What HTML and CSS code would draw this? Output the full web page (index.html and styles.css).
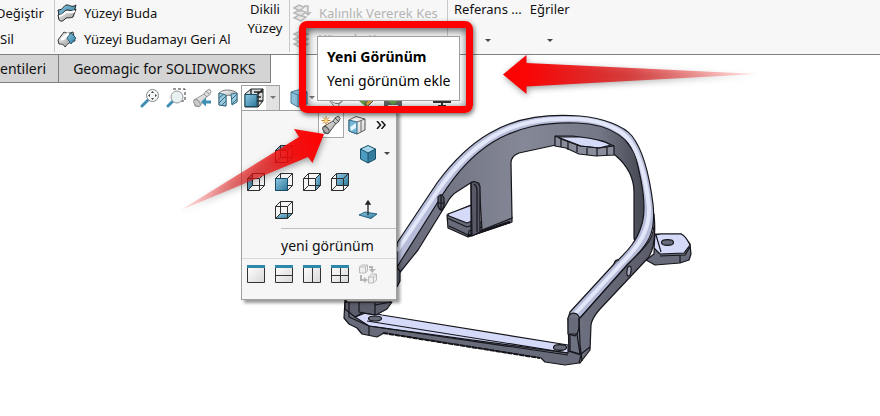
FILE: index.html
```html
<!DOCTYPE html>
<html lang="tr">

<head>
    <meta charset="UTF-8">
    <meta name="viewport" content="width=device-width, initial-scale=1.0">
    <title>Yeni Görünüm</title>
    <link rel="stylesheet" href="styles.css">
</head>

<body>
    <!-- shared icon shapes -->
    <svg class="defs" width="0" height="0" aria-hidden="true">
        <defs>
            <linearGradient id="blue" x1="0" y1="0" x2="1" y2="1">
                <stop offset="0" stop-color="#8fc9e4" />
                <stop offset="1" stop-color="#2c7799" />
            </linearGradient>
            <linearGradient id="gray" x1="0" y1="0" x2="1" y2="1">
                <stop offset="0" stop-color="#ffffff" />
                <stop offset="1" stop-color="#8d8d8d" />
            </linearGradient>
            <linearGradient id="pane" x1="0" y1="0" x2="1" y2="1">
                <stop offset="0" stop-color="#ffffff" />
                <stop offset="1" stop-color="#d8d8d8" />
            </linearGradient>
            <symbol id="wire" viewBox="0 0 20 20">
                <path d="M1.500 6.500h12v12h-12zM6.500 1.500h12v12h-12zM1.500 6.500l5-5M13.500 6.500l5-5M13.500 18.500l5-5M1.500 18.500l5-5" fill="none" stroke="#2d2d2d" />
            </symbol>
            <symbol id="scope" viewBox="0 0 20 20">
                <path d="M2 12L12 6 14 3 17.500 1 19 3.500 17.500 7 14.500 9 7.500 18.500 3 18z" fill="url(#gray)" stroke="#555" />
                <path d="M12 6l3 3M14 3l4 4" stroke="#555" />
                <ellipse cx="5" cy="15" rx="2.500" ry="4" transform="rotate(-40 5 15)" fill="#aaa" stroke="#555" />
            </symbol>
        </defs>
    </svg>

    <header class="ribbon">
        <div class="group group-first">
            <button class="cmd cmd-clipped">Değiştir</button>
            <button class="cmd">Sil</button>
        </div>
        <div class="group group-trim">
            <button class="cmd">
                <svg class="icon" viewBox="0 0 20 20">
                    <path d="M1 7c6 0 5-5 9-5s4 3 9 0l-2 7c-5 2-6-1-9 2s-3 3-6 1z" fill="url(#blue)" stroke="#222" />
                    <path d="M1 12c5 1 6-5 9-5s5 2 9-1l-3 8c-4 2-6-1-9 3-2 2-4 1-5 0z" fill="url(#gray)" stroke="#222" />
                    <path d="M2 13c5 0 5-4 8-4s4 1 8-1" fill="none" stroke="#fff" stroke-width="2" />
                </svg>
                Yüzeyi Buda
            </button>
            <button class="cmd">
                <svg class="icon" viewBox="0 0 20 20">
                    <path d="M1 11l6-8c3 2 6 1 9 0l2 9c-4 1-6 1-10 6-1-3-4-3-6-3z" fill="url(#gray)" stroke="#333" />
                    <path d="M4 10c5 0 4-4 8-5" fill="none" stroke="#fff" stroke-width="3" />
                    <path d="M10 9l4-5 5 5-5 6z" fill="url(#blue)" stroke="#27617d" />
                </svg>
                Yüzeyi Budamayı Geri Al
            </button>
        </div>
        <div class="group group-knit">
            <button class="cmd-tall">Dikili<br>Yüzey</button>
        </div>
        <div class="group group-cut">
            <button class="cmd" disabled>
                <svg class="icon" viewBox="0 0 20 20">
                    <path d="M2 5l5-3 5 2-4 4zM2 10l5-3 7 2-5 4zM2 15l5-3 7 2-5 4zM12 3h4v8M13 9l3 3 3-3" fill="#e6e6e6" stroke="#b8b8b8" stroke-width="1.500" />
                </svg>
                Kalınlık Vererek Kes
            </button>
            <button class="cmd" disabled>
                <svg class="icon" viewBox="0 0 20 20">
                    <path d="M2 5l7-3 7 3-7 4zM2 10l7-3 7 3-7 4zM2 15l7-3 7 3-7 4z" fill="#ddd" stroke="#b8b8b8" stroke-width="1.500" />
                </svg>
                Yüzeyle Kes
            </button>
        </div>
        <div class="group group-ref">
            <button class="cmd-tall">Referans ...<i class="caret"></i></button>
            <button class="cmd-tall">Eğriler<i class="caret"></i></button>
        </div>
    </header>

    <nav class="tabs">
        <button class="tab tab-clipped">entileri</button>
        <button class="tab">Geomagic for SOLIDWORKS</button>
    </nav>

    <main class="viewport">
        <div class="toolbar">
            <button class="tool" aria-label="Ekrana sığdır">
                <svg class="icon" viewBox="0 0 20 20">
                    <path d="M2 18l6-6" stroke="#3f8fb5" stroke-width="3" stroke-linecap="round" />
                    <circle cx="12.500" cy="7.500" r="6" fill="#f4f7f8" stroke="#888" />
                    <path d="M12.500 3l1.500 2h-3zM12.500 12l1.500-2h-3zM8 7.500l2-1.500v3zM17 7.500l-2-1.500v3z" fill="#444" />
                </svg>
            </button>
            <button class="tool" aria-label="Alana yakınlaştır">
                <svg class="icon" viewBox="0 0 20 20">
                    <path d="M7 1h12v12h-4" fill="none" stroke="#333" stroke-dasharray="3 2" />
                    <path d="M2 18l5-5" stroke="#3f8fb5" stroke-width="3" stroke-linecap="round" />
                    <circle cx="11" cy="9" r="6" fill="#e8f0f2" stroke="#999" />
                </svg>
            </button>
            <button class="tool" aria-label="Önceki görünüm">
                <svg class="icon" viewBox="0 0 20 20">
                    <g opacity=".6"><use href="#scope" /></g>
                    <path d="M9 14l5-4.500v3h5v3h-5v3z" fill="#3f8fb5" />
                </svg>
            </button>
            <button class="tool" aria-label="Kesit görünümü">
                <svg class="icon" viewBox="0 0 20 20">
                    <path d="M1 5c4-4 13-4 18 0v9l-5 2V8c-2-1-5-1-6 0v10l-7-1z" fill="url(#gray)" stroke="#777" />
                    <path d="M1 5l7 2v11l-7-1zM13 6l6-1v9l-5 3z" fill="#9cc9dd" stroke="#386e87" />
                    <path d="M1 10l5-4M1 15l7-7M3 18l5-5M13 12l6-6M14 16l5-5" stroke="#386e87" />
                </svg>
            </button>
            <div class="orient">
                <button class="orient-btn" aria-label="Görünüm yönü">
                    <svg class="icon" viewBox="0 0 20 20">
                        <path d="M1 6l6-5h12v12l-5 6H1z" fill="#d8dcde" stroke="#222" />
                        <path d="M7 1v12h12M19 1l-5 5v13M14 4v9M10 4h9M8 9h9" fill="none" stroke="#222" stroke-width="1.400" />
                        <path d="M1 6.500h12v12H1z" fill="url(#blue)" stroke="#174c64" />
                    </svg>
                </button>
                <button class="orient-drop" aria-label="Aç"><i class="caret"></i></button>

                <!-- orientation menu -->
                <div class="menu">
                    <div class="menu-top">
                        <button class="pick pick-new" aria-label="Yeni Görünüm">
                            <svg class="icon" viewBox="0 0 20 20">
                                <use href="#scope" />
                                <path d="M5 1v9M.5 5.500h9M2 2.500l6 6M8 2.500l-6 6" stroke="#c77819" />
                                <circle cx="5" cy="5.500" r="1.500" fill="#ffe08a" />
                            </svg>
                        </button>
                        <button class="pick" aria-label="Görünüm seçici">
                            <svg class="icon" viewBox="0 0 20 20">
                                <path d="M2 5l7-3.500 9 2.500v11l-8 4-8-3z" fill="url(#pane)" stroke="#555" />
                                <path d="M2 5l8 2v12l-8-3z" fill="#72b7d6" stroke="#326d88" />
                                <path d="M3 12l6-4v5l-5 3z" fill="#e4f5fc" />
                                <path d="M10 7l8-3M14 6v11" fill="none" stroke="#666" />
                            </svg>
                        </button>
                        <button class="pick more" aria-label="Daha fazla">
                            <svg class="chevrons" viewBox="0 0 10 8"><path d="M1 0l3.500 4L1 8M5.500 0L9 4 5.500 8" fill="none" stroke="#111" stroke-width="1.500" /></svg>
                        </button>
                    </div>
                    <div class="views">
                        <button class="pick view-top" aria-label="Üst">
                            <svg class="icon" viewBox="0 0 20 20"><path d="M1.500 6.500l5-5h12l-5 5z" fill="url(#blue)" /><use href="#wire" /></svg>
                        </button>
                        <button class="pick view-iso" aria-label="İzometrik">
                            <svg class="icon" viewBox="0 0 20 20">
                                <path d="M10 1.500l7.500 3.500v10L10 19l-7.500-4V5z" fill="#4b9cc0" />
                                <path d="M10 1.500L17.500 5 10 9 2.500 5z" fill="#a4d5eb" />
                                <path d="M10 9l7.500-4v10L10 19z" fill="#347d9e" />
                                <path d="M10 1.500l7.500 3.500v10L10 19l-7.500-4V5zM2.500 5l7.500 4 7.500-4M10 9v10" fill="none" stroke="#1d526b" />
                            </svg>
                        </button>
                        <i class="caret view-caret"></i>
                        <button class="pick view-left" aria-label="Sol">
                            <svg class="icon" viewBox="0 0 20 20"><path d="M1.500 6.500l5-5v12l-5 5z" fill="url(#blue)" /><use href="#wire" /></svg>
                        </button>
                        <button class="pick" aria-label="Ön">
                            <svg class="icon" viewBox="0 0 20 20"><use href="#wire" /><path d="M1.500 6.500h12v12h-12z" fill="url(#blue)" stroke="#174c64" /></svg>
                        </button>
                        <button class="pick" aria-label="Sağ">
                            <svg class="icon" viewBox="0 0 20 20"><path d="M13.500 6.500l5-5v12l-5 5z" fill="url(#blue)" /><use href="#wire" /></svg>
                        </button>
                        <button class="pick" aria-label="Arka">
                            <svg class="icon" viewBox="0 0 20 20"><path d="M6.500 1.500h12v12h-12z" fill="url(#blue)" /><use href="#wire" /></svg>
                        </button>
                        <button class="pick view-bottom" aria-label="Alt">
                            <svg class="icon" viewBox="0 0 20 20"><path d="M1.500 18.500l5-5h12l-5 5z" fill="url(#blue)" /><use href="#wire" /></svg>
                        </button>
                        <button class="pick view-normal" aria-label="Dik">
                            <svg class="icon" viewBox="0 0 20 20">
                                <path d="M1 15l6-3 12 2-6 4.500z" fill="url(#blue)" stroke="#27617d" />
                                <path d="M10 15V2M8 4l2-3 2 3z" fill="#222" stroke="#222" stroke-width="1.300" />
                            </svg>
                        </button>
                    </div>
                    <button class="saved">yeni görünüm</button>
                    <div class="layouts">
                        <button class="pick" aria-label="Tek görünüm">
                            <svg class="icon" viewBox="0 0 20 20"><path d="M1.500 1.500h17v17h-17z" fill="url(#pane)" stroke="#333" /><path d="M1 1h18v3H1z" fill="#2f86ab" /></svg>
                        </button>
                        <button class="pick" aria-label="İki görünüm yatay">
                            <svg class="icon" viewBox="0 0 20 20"><path d="M1.500 1.500h17v17h-17zM1.500 11.500h17" fill="url(#pane)" stroke="#333" /><path d="M1 1h18v3H1z" fill="#2f86ab" /></svg>
                        </button>
                        <button class="pick" aria-label="İki görünüm dikey">
                            <svg class="icon" viewBox="0 0 20 20"><path d="M1.500 1.500h17v17h-17zM10.500 3v15.500" fill="url(#pane)" stroke="#333" /><path d="M1 1h18v3H1z" fill="#2f86ab" /></svg>
                        </button>
                        <button class="pick" aria-label="Dört görünüm">
                            <svg class="icon" viewBox="0 0 20 20"><path d="M1.500 1.500h17v17h-17zM10.500 3v15.500M1.500 11.500h17" fill="url(#pane)" stroke="#333" /><path d="M1 1h18v3H1z" fill="#2f86ab" /></svg>
                        </button>
                        <button class="pick" aria-label="Görünümleri bağla" disabled>
                            <svg class="icon" viewBox="0 0 20 20">
                                <path d="M1.500 3l2-2h6v6l-2 2h-6zM10.500 13l3-3h5v6l-3 3h-5zM1.500 3h6v6M7.500 3l2-2M10.500 13h5v6M15.500 13l3-3" fill="#eee" stroke="#bbb" />
                                <path d="M11 2h4v3h3l-4 4-3-4h2V4h-2zM2 11h2v4h2v-2l4 3-4 3v-2H2z" fill="#b5b5b5" />
                            </svg>
                        </button>
                    </div>
                </div>
            </div>
            <button class="tool tool-style" aria-label="Görüntü stili">
                <svg class="icon" viewBox="0 0 20 20">
                    <path d="M2 4l10-3 6 3v12l-9 3-7-4z" fill="#8cc0d9" stroke="#487d96" />
                    <path d="M2 4l7 3v12M9 7l9-3" fill="none" stroke="#487d96" />
                </svg>
                <i class="caret"></i>
            </button>
            <button class="tool tool-hide" aria-label="Gizle/göster">
                <svg class="icon" viewBox="0 0 20 20"><path d="M1 8c5 10 13 10 18 0M2 12l5 6M18 8l-7 10" fill="none" stroke="#777" /></svg>
            </button>
            <button class="tool tool-look" aria-label="Görünümü düzenle">
                <svg class="icon" viewBox="0 0 20 20"><path d="M2 13h12l-5 6z" fill="#65a044" /><path d="M8 15l8-6 2 2-8 8z" fill="#d4a847" stroke="#555" /></svg>
            </button>
            <button class="tool" aria-label="Sahne uygula">
                <svg class="icon" viewBox="0 0 20 20"><path d="M1 12h18v7h-4v-2H5v2H1z" fill="#666" /><path d="M5 13h10l-5 4z" fill="#65a044" /></svg>
            </button>
            <button class="tool tool-screen" aria-label="Görünüm ayarları">
                <svg class="icon" viewBox="0 0 20 20"><path d="M1 14h18M10 14v4M6 18h8" stroke="#333" stroke-width="2" /></svg>
                <i class="caret"></i>
            </button>
        </div>

        <!-- frame part -->
        <svg class="model" viewBox="340 110 360 260" role="img" aria-label="Parça">
            <defs>
                <linearGradient id="wall" x1="0" x2="1">
                    <stop offset="0" stop-color="#676978" />
                    <stop offset=".5" stop-color="#858896" />
                    <stop offset=".8" stop-color="#747786" />
                    <stop offset="1" stop-color="#3f414b" />
                </linearGradient>
                <linearGradient id="near" x1="0" x2="1">
                    <stop offset="0" stop-color="#707382" />
                    <stop offset="1" stop-color="#595b68" />
                </linearGradient>
            </defs>
            <g stroke="#15151b" stroke-width="1.200" stroke-linejoin="round" fill="#686b79">
                <!-- right ear -->
                <path d="M646 260l8-6 1-20 26 0 9 10 1 10-2 6-9 3-25 2z" />
                <path d="M655 235l6-1h20c5 2 7 7 9 11l-6 8-24 1-6-6z" fill="#d4daf8" />
                <path d="M656 235l5 17M660 256l25-1 5-8M680 255v8" fill="none" />
                <ellipse cx="667.500" cy="242.500" rx="6" ry="2.800" />

                <!-- left foot -->
                <path d="M447 215l24-10 3 18 38-6v5l-44 15-20-9z" />
                <path d="M448 214l24-9v16l-5 2-18-7z" fill="#d4daf8" />
                <path d="M447 218l20 9 6-2M468 236l1-5 43-13M449 226l19 9 6-1" fill="none" />
                <path d="M468 236l42-14" stroke-width="2.500" />

                <!-- back wall -->
                <path d="M397 276L418 250 447 203Q451 195 458 191L472 182 479 183 482 230 512 218 511 163Q511 156 519 153L556 145 615 155Q634 171 634 192L634 239 637 241 650 205 636 155 618 130 580 118 540 120 500 132 455 170 397 256z" fill="url(#wall)" />
                <path d="M471 183q4-4 9 3v46l-8 4z" fill="#575966" />
                <path d="M474 184q3 2 3 6v42" fill="none" />
                <path d="M471 183v52" fill="none" />

                <!-- inner tab -->
                <path d="M555 136l18 0 30 5 11 5v9l-18 1-17-2-13-6-11-2z" fill="#898c9b" />
                <path d="M558 137l22 0q20 2 31 8l-12 3-19-2-19-7z" fill="#d4daf8" />
                <path d="M555 136l13 5 13 5 18 2 15-2M561 139v8M568 142v8M577 145v7M587 148v7M597 148v8M607 147v8" fill="none" />

                <!-- rounded rim -->
                <path d="M397 243L437 183Q462 149 490 133C519 116 550 114 580 116C603 118 624 126 632 136C643 150 649 172 653 204C656 232 650 243 628 264L580 318 569 316 570 312 615 263C629 250 637 240 641 227C648 208 641 179 637 162C633 140 612 124 577 123C544 122 518 127 493 142Q464 160 441 197L397 267z" fill="#b7bdd9" />
                <path d="M397 251L439 189Q463 155 492 137C520 120 550 118 580 119C604 121 622 130 630 141C640 155 646 180 649 207C650 229 640 245 622 263L574 315" fill="none" stroke="#e3e7fa" stroke-width="4" />

                <!-- near side -->
                <path d="M654 214C656 236 650 243 628 264L580 318 577 314Q570 311 568 318L569 354 580 363 590 350 591 325Q592 318 600 309L648 258Q657 246 654 214z" fill="url(#near)" />
                <path d="M568 318v16l7 2q5-3 4-18" />
                <path d="M570 334l7 0 3 20-10-3zM579 318l1 26 2 17M569 352l12 2 9-7" fill="none" />
                <ellipse cx="629" cy="271" rx="2" ry="5" fill="#a7abc0" transform="rotate(8 629 271)" />
                <path d="M614 264q1-5 5-4" />
                <path d="M438 197q3-5 6 1v8q-3 8-6 0zM441 194v17M438 203h7" fill="#555766" />
                <path d="M397 268l3 3v10l-3 6" />

                <!-- base bar -->
                <path d="M345 300l-1 18 5 6 8 4 5 6 15 3 7-4 157 25 4 4 20 3 14-2 2-8-13-4-201-32z" />
                <path d="M355 317l13-5 14 3 186 30v8L369 326z" fill="#d4daf8" />
                <path d="M345 302h47l-5 7-11 6-14-2-7 4-10-8z" fill="#5c5e6c" />
                <path d="M349 302v15l20 9 199 29M359 302v10l16 3v-12M369 326v9M367 321l201 32M375 305l16-3" fill="none" />
                <path d="M383 333l157 25" stroke-width="2" stroke-dasharray="5 1" />
                <ellipse cx="375" cy="318.500" rx="6.500" ry="2.500" />
                <ellipse cx="560" cy="347.500" rx="6.500" ry="2.800" />
            </g>
        </svg>
    </main>

    <div class="highlight"></div>
    <div class="tooltip" role="tooltip">
        <strong>Yeni Görünüm</strong>
        <span>Yeni görünüm ekle</span>
    </div>

    <svg class="arrows" viewBox="0 0 880 416" aria-hidden="true">
        <defs>
            <linearGradient id="fadeRight" gradientUnits="userSpaceOnUse" x1="503" y1="74" x2="758" y2="74">
                <stop offset="0" stop-color="#ff0000" />
                <stop offset=".1" stop-color="#f90606" />
                <stop offset=".5" stop-color="#dd1717" stop-opacity=".75" />
                <stop offset="1" stop-color="#ff2222" stop-opacity=".1" />
            </linearGradient>
            <linearGradient id="fadeLeft" gradientUnits="userSpaceOnUse" x1="324" y1="134" x2="180" y2="210">
                <stop offset="0" stop-color="#ff0000" />
                <stop offset=".2" stop-color="#f50808" stop-opacity=".95" />
                <stop offset=".4" stop-color="#ec1010" stop-opacity=".75" />
                <stop offset=".65" stop-color="#e81818" stop-opacity=".55" />
                <stop offset="1" stop-color="#ff2222" stop-opacity=".1" />
            </linearGradient>
        </defs>
        <path d="M503 74.500L526.500 55V63L758 74 526.500 86.500V94z" fill="url(#fadeRight)" />
        <path d="M324 134L294 129 299 137 180 210.500 308 157 312.500 163z" fill="url(#fadeLeft)" />
    </svg>
</body>

</html>
```
FILE: styles.css
```css
* {
    box-sizing: border-box;
}

body {
    margin: 0;
    position: relative;
    overflow: hidden;
    background-color: #ffffff;
    color: #111111;
    font-family: "Noto Sans", "Open Sans", sans-serif;
    font-size: 13px;
    line-height: 19px;
}

button {
    margin: 0;
    padding: 0;
    border: none;
    background: none;
    color: inherit;
    font: inherit;
}

.defs {
    position: absolute;
}

.icon {
    display: block;
    flex: none;
    width: 20px;
    height: 20px;
}

.caret {
    flex: none;
    width: 0;
    height: 0;
    border: 3px solid transparent;
    border-top-color: #444444;
    border-bottom: none;
}

/* ribbon */
.ribbon {
    display: flex;
    height: 55px;
    background-color: #f7f7f7;
    border-bottom: 1px solid #808080;
}

.group {
    display: flex;
    flex-direction: column;
    height: 52px;
    border-right: 1px solid #c8c8c8;
}

.cmd {
    display: flex;
    align-items: center;
    gap: 7px;
    height: 26px;
    white-space: nowrap;
}

.cmd:disabled {
    color: #b4b4b4;
}

.cmd-clipped {
    margin-left: -4px;
}

.cmd-tall {
    display: flex;
    flex-direction: column;
    align-items: center;
    white-space: nowrap;
}

.group-first {
    width: 55px;
}

.group-trim {
    width: 186px;
    padding-left: 2px;
    border-right: none;
}

.group-knit {
    width: 49px;
    align-items: center;
}

.group-cut {
    width: 158px;
    padding-left: 2px;
}

.group-ref {
    flex-direction: row;
    align-items: flex-start;
    gap: 8px;
    padding-left: 6px;
    border-right: none;
}

.group-ref .caret {
    margin-top: 20px;
}

/* tabs */
.tabs {
    display: flex;
}

.tab {
    height: 28px;
    padding: 0 14px;
    background-color: #d4d4d4;
    border-right: 1px solid #808080;
    border-bottom: 1px solid #808080;
    font-size: 14px;
    white-space: nowrap;
}

.tab-clipped {
    padding: 0 12px 0 0;
}

/* view toolbar */
.toolbar {
    display: flex;
    align-items: center;
    height: 27px;
    padding: 2px 0 0 137px;
}

.tool {
    display: flex;
    align-items: center;
    justify-content: center;
    width: 26px;
    height: 25px;
}

.orient {
    position: relative;
    display: flex;
    width: 39px;
    height: 26px;
    background-color: #ffffff;
    border: 1px solid #a0a0a0;
}

.orient-btn {
    width: 24px;
    padding-left: 2px;
}

.orient-drop {
    display: flex;
    flex: 1;
    align-items: center;
    justify-content: center;
    background-color: #e2e2e2;
}

.tool .caret,
.orient-drop .caret {
    border-top-color: #777777;
}

.tool-style {
    width: 44px;
}

.tool-screen {
    width: 44px;
    margin-left: 17px;
}

.tool-look {
    margin-left: 4px;
}

/* orientation menu */
.menu {
    position: absolute;
    top: 24px;
    left: -1px;
    z-index: 1;
    width: 156px;
    padding-bottom: 12px;
    background-color: #f6f6f6;
    border: 1px solid #a0a0a0;
    box-shadow: 3px 3px 3px rgba(0, 0, 0, 0.4);
}

.menu-top {
    display: flex;
    justify-content: flex-end;
    padding: 1px 4px 2px 0;
}

.pick {
    display: flex;
    align-items: center;
    justify-content: center;
    width: 26px;
    height: 26px;
}

.pick-new {
    background-color: #ffffff;
    border: 1px solid #a8a8a8;
}

.more {
    width: 22px;
}

.chevrons {
    width: 10px;
    height: 8px;
}

.views {
    display: grid;
    grid-template-columns: repeat(5, 28px) 10px;
    grid-auto-rows: 28px;
    align-items: center;
    justify-items: center;
}

.view-top,
.view-bottom {
    grid-column: 2;
}

.view-iso,
.view-normal {
    grid-column: 5;
}

.view-left {
    grid-column: 1;
}

.saved {
    display: block;
    width: 115px;
    height: 30px;
    margin-top: 4px;
    margin-left: 39px;
    padding-top: 4px;
    border-top: 1px solid #c0c0c0;
    font-size: 14px;
    text-align: left;
    white-space: nowrap;
}

.layouts {
    display: grid;
    grid-template-columns: repeat(5, 28px);
    justify-items: center;
    padding-top: 2px;
    border-top: 1px solid #d8d8d8;
}

/* part */
.model {
    display: block;
    width: 360px;
    height: 260px;
    margin-left: 340px;
}

/* callouts */
.highlight {
    position: absolute;
    top: 21px;
    left: 299px;
    z-index: 2;
    width: 174px;
    height: 92px;
    border: 7px solid #ff0000;
    border-radius: 8px;
    box-shadow: 1px 2px 5px rgba(0, 0, 0, 0.6), inset 1px 2px 8px rgba(0, 0, 0, 0.7);
}

.tooltip {
    position: absolute;
    top: 36px;
    left: 317px;
    z-index: 3;
    display: flex;
    flex-direction: column;
    gap: 5px;
    padding: 10px 9px;
    background-color: #ffffff;
    border: 1px solid #a0a0a0;
    color: #000000;
    font-size: 14px;
    white-space: nowrap;
}

.arrows {
    position: absolute;
    top: 0;
    left: 0;
    z-index: 4;
    width: 880px;
    height: 416px;
    pointer-events: none;
    filter: drop-shadow(1px 2px 3px rgba(0, 0, 0, 0.4));
}
```
